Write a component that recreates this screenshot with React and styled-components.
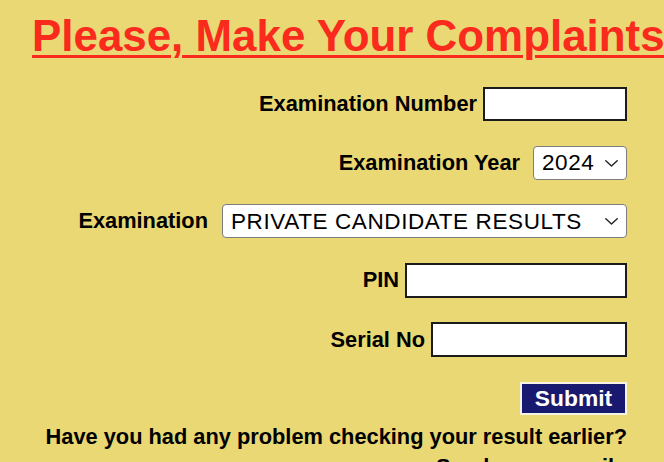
import React from 'react';
import styled, { createGlobalStyle } from 'styled-components';

const Global = createGlobalStyle`
  html, body { margin: 0; padding: 0; background: #E9D873; }
  body { font-family: "Liberation Sans", Arial, Helvetica, sans-serif; }
`;

const Page = styled.main`
  width: 664px;
  height: 462px;
  overflow: hidden;
  box-sizing: border-box;
  padding: 11px 37px 0 32px;
  background: #E9D873;
  font-family: "Liberation Sans", Arial, sans-serif;
`;

const Title = styled.h1`
  margin: 0;
  font-size: 43.9px;
  line-height: 50px;
  font-weight: 700;
  color: #FA2A1D;
  white-space: nowrap;
  text-decoration: underline;
  text-decoration-thickness: 3px;
  text-underline-offset: 4px;
`;

const Form = styled.form`
  display: flex;
  flex-direction: column;
  align-items: flex-end;
  gap: 24.5px;
  margin-top: 26px;
`;

const Row = styled.div`
  display: flex;
  align-items: center;
  gap: ${(p) => p.$gap}px;
  min-height: 34px;
`;

const Label = styled.label`
  font-size: 21.8px;
  font-weight: 700;
  color: #000;
  white-space: nowrap;
`;

const TextInput = styled.input`
  box-sizing: border-box;
  width: ${(p) => p.$w}px;
  height: ${(p) => p.$h || 34}px;
  margin: 0;
  padding: 0 5px;
  border: 2px solid #1b1b1b;
  background: #fff;
  font: 20px Inter, "Liberation Sans", sans-serif;
  outline: none;
`;

const SelectWrap = styled.div`
  position: relative;
  width: ${(p) => p.$w}px;
  height: 34px;
`;

const Select = styled.select`
  box-sizing: border-box;
  appearance: none;
  -webkit-appearance: none;
  width: 100%;
  height: 100%;
  margin: 0;
  padding: 0 24px 0 8px;
  border: 1px solid #7d7d7d;
  border-radius: 4px;
  background: #fff;
  color: #000;
  font: 22.5px "Liberation Sans", Arial, sans-serif;
  letter-spacing: 0.6px;
  outline: none;
`;

const Chevron = styled.svg`
  position: absolute;
  right: 9px;
  top: 14px;
  width: 13px;
  height: 7px;
  pointer-events: none;
`;

const SubmitButton = styled.button`
  box-sizing: border-box;
  width: 107px;
  height: 33px;
  margin: 0;
  padding: 0 0 1px;
  border: 2px solid #f6f2e4;
  background: #191970;
  color: #fff;
  font: 700 22.8px "Liberation Sans", Arial, sans-serif;
  cursor: pointer;
`;

const Note = styled.p`
  margin: ${(p) => p.$top}px ${(p) => p.$right}px 0 0;
  font-size: 21.8px;
  font-weight: 700;
  line-height: 25px;
  color: #000;
  text-align: right;
  white-space: nowrap;
`;

function SelectField({ width, value, options }) {
  return (
    <SelectWrap $w={width}>
      <Select defaultValue={value}>
        {options.map((o) => (
          <option key={o}>{o}</option>
        ))}
      </Select>
      <Chevron viewBox="0 0 13 7" fill="none">
        <path d="M0.8 0.8 L6.5 6 L12.2 0.8" stroke="#222" strokeWidth="1.4" strokeLinecap="round" strokeLinejoin="round" />
      </Chevron>
    </SelectWrap>
  );
}

export default function App() {
  return (
    <>
      <Global />
      <Page>
        <Title>Please, Make Your Complaints</Title>
        <Form onSubmit={(e) => e.preventDefault()}>
          <Row $gap={6}>
            <Label>Examination Number</Label>
            <TextInput $w={144} />
          </Row>
          <Row $gap={13}>
            <Label>Examination Year</Label>
            <SelectField width={94} value="2024" options={['2024', '2023', '2022', '2021', '2020']} />
          </Row>
          <Row $gap={14}>
            <Label>Examination</Label>
            <SelectField
              width={405}
              value="PRIVATE CANDIDATE RESULTS"
              options={['PRIVATE CANDIDATE RESULTS', 'SCHOOL CANDIDATE RESULTS']}
            />
          </Row>
          <Row $gap={6}>
            <Label>PIN</Label>
            <TextInput $w={222} $h={35} />
          </Row>
          <Row $gap={6}>
            <Label>Serial No</Label>
            <TextInput $w={196} $h={35} />
          </Row>
          <Row $gap={0}>
            <SubmitButton type="submit">Submit</SubmitButton>
          </Row>
        </Form>
        <Note $top={8} $right={0}>Have you had any problem checking your result earlier?</Note>
        <Note $top={5} $right={13}>Send us an email</Note>
      </Page>
    </>
  );
}
